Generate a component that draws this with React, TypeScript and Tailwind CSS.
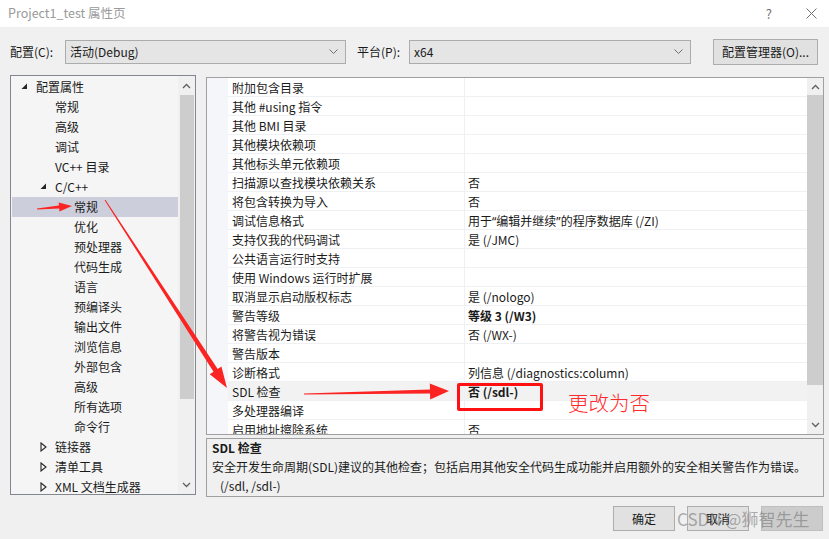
import React from "react";

type TreeItem = { text: string; level: number; state?: "open" | "closed"; selected?: boolean };

const treeItems: TreeItem[] = [
	{ text: "配置属性", level: 0, state: "open" },
	{ text: "常规", level: 1 },
	{ text: "高级", level: 1 },
	{ text: "调试", level: 1 },
	{ text: "VC++ 目录", level: 1 },
	{ text: "C/C++", level: 1, state: "open" },
	{ text: "常规", level: 2, selected: true },
	{ text: "优化", level: 2 },
	{ text: "预处理器", level: 2 },
	{ text: "代码生成", level: 2 },
	{ text: "语言", level: 2 },
	{ text: "预编译头", level: 2 },
	{ text: "输出文件", level: 2 },
	{ text: "浏览信息", level: 2 },
	{ text: "外部包含", level: 2 },
	{ text: "高级", level: 2 },
	{ text: "所有选项", level: 2 },
	{ text: "命令行", level: 2 },
	{ text: "链接器", level: 1, state: "closed" },
	{ text: "清单工具", level: 1, state: "closed" },
	{ text: "XML 文档生成器", level: 1, state: "closed" },
];

type GridRow = { name: string; value: React.ReactNode; bold?: boolean; active?: boolean };

const q = (s: string) => <span className="font-['Noto_Sans',sans-serif]">{s}</span>;

const gridRows: GridRow[] = [
	{ name: "附加包含目录", value: "" },
	{ name: "其他 #using 指令", value: "" },
	{ name: "其他 BMI 目录", value: "" },
	{ name: "其他模块依赖项", value: "" },
	{ name: "其他标头单元依赖项", value: "" },
	{ name: "扫描源以查找模块依赖关系", value: "否" },
	{ name: "将包含转换为导入", value: "否" },
	{ name: "调试信息格式", value: <>用于{q("“")}编辑并继续{q("”")}的程序数据库 (/ZI)</> },
	{ name: "支持仅我的代码调试", value: "是 (/JMC)" },
	{ name: "公共语言运行时支持", value: "" },
	{ name: "使用 Windows 运行时扩展", value: "" },
	{ name: "取消显示启动版权标志", value: "是 (/nologo)" },
	{ name: "警告等级", value: "等级 3 (/W3)", bold: true },
	{ name: "将警告视为错误", value: "否 (/WX-)" },
	{ name: "警告版本", value: "" },
	{ name: "诊断格式", value: "列信息 (/diagnostics:column)" },
	{ name: "SDL 检查", value: "否 (/sdl-)", bold: true, active: true },
	{ name: "多处理器编译", value: "" },
	{ name: "启用地址擦除系统", value: "否" },
];

// tapered arrow polygon from (x1,y1) to tip (x2,y2)
function arrowPoints(x1: number, y1: number, x2: number, y2: number, tail: number, shaft: number, headW: number, headL: number) {
	const len = Math.hypot(x2 - x1, y2 - y1);
	const dx = (x2 - x1) / len, dy = (y2 - y1) / len;
	const nx = -dy, ny = dx;
	const bx = x2 - dx * headL, by = y2 - dy * headL;
	const p = (x: number, y: number) => `${x.toFixed(1)},${y.toFixed(1)}`;
	return [
		p(x1 + nx * tail / 2, y1 + ny * tail / 2),
		p(bx + nx * shaft / 2, by + ny * shaft / 2),
		p(bx + nx * headW / 2, by + ny * headW / 2),
		p(x2, y2),
		p(bx - nx * headW / 2, by - ny * headW / 2),
		p(bx - nx * shaft / 2, by - ny * shaft / 2),
		p(x1 - nx * tail / 2, y1 - ny * tail / 2),
	].join(" ");
}

function Chevron({ up }: { up?: boolean }) {
	return (
		<svg width="9" height="6" viewBox="0 0 9 6">
			<polyline points={up ? "1,5 4.5,1.5 8,5" : "1,1 4.5,4.5 8,1"} fill="none" stroke="#606060" strokeWidth="1.3" />
		</svg>
	);
}

function Combo({ text, width }: { text: string; width: string }) {
	return (
		<div className={`${width} h-[24px] bg-[#e5e5e5] border border-[#acacac] flex items-center pl-[4px] pr-[7px]`}>
			<span className="flex-1">{text}</span>
			<svg width="9" height="5" viewBox="0 0 9 5">
				<polyline points="0.5,0.5 4.5,4.5 8.5,0.5" fill="none" stroke="#707070" strokeWidth="1" />
			</svg>
		</div>
	);
}

function Triangle({ state }: { state?: "open" | "closed" }) {
	if (state === "open")
		return (
			<svg width="7" height="7" viewBox="0 0 7 7" className="mt-[-1px]">
				<polygon points="6,0.5 6,6 0.5,6" fill="#262626" />
			</svg>
		);
	if (state === "closed")
		return (
			<svg width="7" height="10" viewBox="0 0 7 10">
				<polygon points="1,1 6,5 1,9" fill="none" stroke="#262626" strokeWidth="1.1" />
			</svg>
		);
	return null;
}

function TreePanel() {
	return (
		<div className="w-[186px] h-[420px] bg-[#f5f5f5] border border-[#828790] flex overflow-hidden">
			<div className="flex-1 pt-[1px] overflow-hidden">
				{treeItems.map((it, i) => (
					<div
						key={i}
						className={`h-[20px] flex items-center ${it.selected ? "bg-[#cccedb] ml-[1px]" : ""}`}
						style={{ paddingLeft: (it.selected ? 9 : 10) + it.level * 19 }}
					>
						<div className="w-[15px] flex items-center">
							<Triangle state={it.state} />
						</div>
						<span className="whitespace-nowrap">{it.text}</span>
					</div>
				))}
			</div>
			<div className="w-[17px] bg-[#f0f0f0] flex flex-col items-center">
				<div className="h-[19px] flex items-center justify-center">
					<Chevron up />
				</div>
				<div className="w-[14px] h-[304px] bg-[#cdcdcd]" />
				<div className="flex-1 flex items-end justify-center pb-[6px]">
					<Chevron />
				</div>
			</div>
		</div>
	);
}

function PropertyGrid() {
	return (
		<div className="w-[618px] h-[358px] bg-white border border-[#a0a0a0] flex overflow-hidden">
			<div className="flex-1 overflow-hidden">
				{gridRows.map((r, i) => (
					<div key={i} className={`h-[19px] flex ${r.active ? "bg-[#f2f2f2]" : ""}`}>
						<div className="w-[21px] bg-[#f5f6fa]" />
						<div className="w-[236px] pl-[4px] pt-[1px] border-b border-[#eef0f4] leading-[17px] whitespace-nowrap">{r.name}</div>
						<div className={`flex-1 pl-[3px] pt-[1px] border-b border-l border-[#eef0f4] leading-[17px] whitespace-nowrap ${r.bold ? "font-bold" : ""}`}>
							{r.value}
						</div>
					</div>
				))}
			</div>
			<div className="w-[16px] bg-[#f0f0f0] flex flex-col">
				<div className="h-[17px] flex items-center justify-center">
					<Chevron up />
				</div>
				<div className="h-[290px] bg-[#cdcdcd]" />
				<div className="flex-1 flex items-end justify-center pb-[6px]">
					<Chevron />
				</div>
			</div>
		</div>
	);
}

function Description() {
	return (
		<div className="w-[618px] h-[59px] mt-[3px] bg-[#f0f0f0] border border-[#a0a0a0] pl-[5px]">
			<div className="h-[18px] leading-[18px] font-bold">SDL 检查</div>
			<div className="h-[19px] leading-[19px] whitespace-nowrap">
				安全开发生命周期(SDL)建议的其他检查；包括启用其他安全代码生成功能并启用额外的安全相关警告作为错误。
			</div>
			<div className="h-[19px] leading-[19px] pl-[8px]">(/sdl, /sdl-)</div>
		</div>
	);
}

function Annotations() {
	const red = "#fc2323";
	return (
		<>
			<svg className="absolute left-0 top-0 pointer-events-none" width="829" height="539">
				<polygon points={arrowPoints(37, 209, 72, 206, 1, 3, 9, 13)} fill={red} />
				<polygon points={arrowPoints(105, 200, 227, 388, 1, 5, 14, 21)} fill={red} />
				<polygon points={arrowPoints(304, 394, 449, 391, 1, 4, 16, 19)} fill={red} />
			</svg>
			<div className="absolute left-[457px] top-[383px] w-[86px] h-[28px] border-[3px] border-[#ff1111] rounded-[2px]" />
			<div className="absolute left-[568px] top-[388px] text-[20.5px] leading-[28px] text-[#ff2a2a] font-light">更改为否</div>
		</>
	);
}

export default function App() {
	return (
		<div className="relative w-[829px] h-[539px] bg-[#f0f0f0] overflow-hidden text-[12px] text-[#1a1a1a] font-['Noto_Sans_CJK_SC','Noto_Sans',sans-serif]">
			{/* title bar */}
			<div className="h-[27px] bg-white flex items-center pl-[8px] pr-[12px]">
				<span className="flex-1 text-[#9a9a9a] text-[12.5px]">Project1_test 属性页</span>
				<span className="text-[#707070] text-[13px] mr-[34px]">?</span>
				<svg width="11" height="11" viewBox="0 0 11 11">
					<path d="M0.5 0.5 L10.5 10.5 M10.5 0.5 L0.5 10.5" stroke="#707070" strokeWidth="1" />
				</svg>
			</div>

			{/* config row */}
			<div className="mt-[11px] h-[27px] flex items-center pl-[10px]">
				<span className="w-[55px]">配置(C):</span>
				<Combo text="活动(Debug)" width="w-[281px]" />
				<span className="w-[52px] ml-[11px]">平台(P):</span>
				<Combo text="x64" width="w-[282px]" />
				<button className="ml-[22px] w-[105px] h-[26px] bg-[#e1e1e1] border border-[#adadad]">配置管理器(O)...</button>
			</div>

			{/* body */}
			<div className="mt-[10px] flex items-start pl-[10px]">
				<TreePanel />
				<div className="ml-[10px] mt-[2px] flex flex-col">
					<PropertyGrid />
					<Description />
				</div>
			</div>

			{/* footer */}
			<div className="mt-[9px] flex justify-end gap-[12px] pr-[6px]">
				<button className="w-[62px] h-[25px] bg-[#e1e1e1] border border-[#adadad]">确定</button>
				<button className="w-[62px] h-[25px] bg-[#e1e1e1] border border-[#adadad]">取消</button>
				<button className="w-[62px] h-[25px] bg-[#cccccc] border border-[#bfbfbf]" />
			</div>

			<Annotations />
			<div className="absolute left-[677px] top-[506px] text-[17px] leading-[26px] text-[rgba(110,110,110,0.55)] whitespace-nowrap">CSDN @狮智先生</div>
		</div>
	);
}
